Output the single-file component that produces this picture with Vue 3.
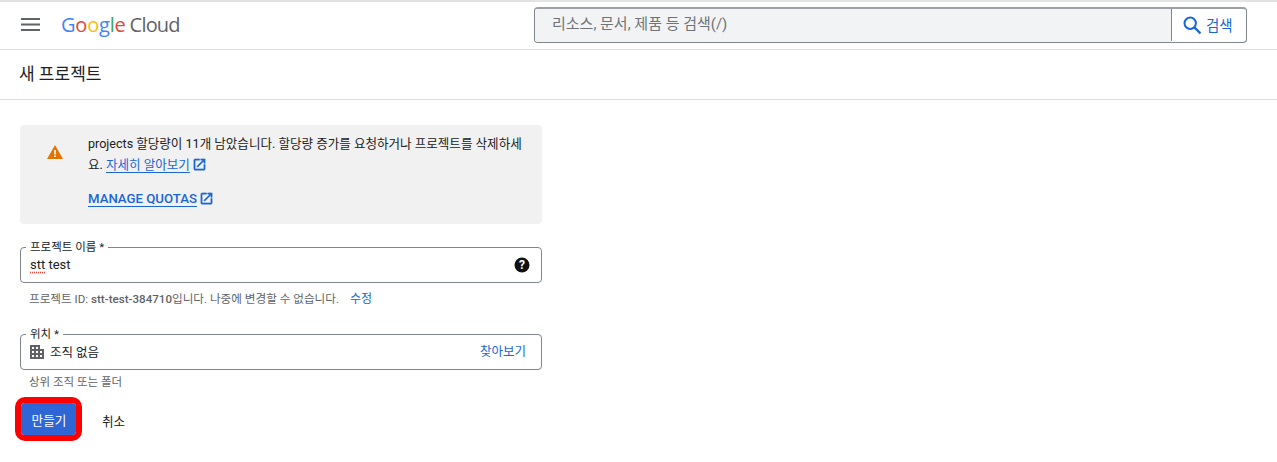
<script setup>
const ext = "M19 19H5V5h7V3H5a2 2 0 0 0-2 2v14a2 2 0 0 0 2 2h14a2 2 0 0 0 2-2v-7h-2v7zM14 3v2h3.59l-9.83 9.83 1.41 1.41L19 6.41V10h2V3h-7z";
</script>

<template>
  <div class="page">
    <header class="topbar">
      <div class="brand">
        <svg class="menu" viewBox="0 0 19 13" width="19" height="13"><path d="M0 1h19M0 6.500h19M0 12h19" stroke="#5f6368" stroke-width="2"/></svg>
        <div class="logo"><span class="b">G</span><span class="r">o</span><span class="y">o</span><span class="b">g</span><span class="g">l</span><span class="r">e</span><span class="cloud">Cloud</span></div>
      </div>
      <div class="search">
        <div class="search-input">리소스, 문서, 제품 등 검색(/)</div>
        <div class="search-btn">
          <svg viewBox="0 0 20 20" width="20" height="20"><circle cx="8.2" cy="8.2" r="5.7" fill="none" stroke="#1967d2" stroke-width="2"/><path d="M12.4 12.4l6 6" stroke="#1967d2" stroke-width="2.2"/></svg>
          <span>검색</span>
        </div>
      </div>
    </header>
    <div class="titlebar">새 프로젝트</div>
    <main class="form">
      <section class="notice">
        <svg class="warn" viewBox="0 0 16 14" width="16" height="14"><path d="M8 0l8 14H0z" fill="#e37400"/><path d="M7.2 5h1.6v4.400H7.200zM7.200 10.400h1.600V12H7.200z" fill="#fff"/></svg>
        <div class="notice-body">
          <p class="msg">projects 할당량이 11개 남았습니다. 할당량 증가를 요청하거나 프로젝트를 삭제하세요. <a>자세히 알아보기</a><svg class="ext" viewBox="0 0 24 24" width="15" height="15"><path :d="ext" fill="#1a66d9" stroke="#1a66d9" stroke-width="0.8"/></svg></p>
          <p class="manage"><a>MANAGE QUOTAS</a><svg class="ext" viewBox="0 0 24 24" width="15" height="15"><path :d="ext" fill="#1a66d9" stroke="#1a66d9" stroke-width="0.8"/></svg></p>
        </div>
      </section>

      <div class="field first">
        <label>프로젝트 이름 *</label>
        <span class="value"><span class="typo">stt</span> test</span>
        <svg class="help" viewBox="0 0 16 16" width="16" height="16"><circle cx="8" cy="8" r="7.5" fill="#111"/><text x="8" y="12" text-anchor="middle" class="q">?</text></svg>
      </div>
      <p class="hint">프로젝트 ID: <b>stt-test-384710</b>입니다. 나중에 변경할 수 없습니다.<a class="edit">수정</a></p>

      <div class="field second">
        <label>위치 *</label>
        <svg class="org" viewBox="0 0 14 14" width="14" height="14"><path fill-rule="evenodd" d="M0 0h10v4h4v10H0zM2 2v2h2V2zm4 0v2h2V2zM2 6v2h2V6zm4 0v2h2V6zm4 0v2h2V6zM2 10v2h2v-2zm4 0v2h2v-2zm4 0v2h2v-2z" fill="#5f6368"/></svg>
        <span class="value org-name">조직 없음</span>
        <a class="browse">찾아보기</a>
      </div>
      <p class="hint hint2">상위 조직 또는 폴더</p>

      <div class="actions">
        <button class="create">만들기</button>
        <span class="cancel">취소</span>
      </div>
    </main>
  </div>
</template>

<style>
html, body { margin: 0; background: #fff; }
</style>

<style scoped>
.page {
  height: 462px;
  overflow: hidden;
  background: #fff;
  color: #202124;
  font-family: Roboto, "Noto Sans CJK KR", sans-serif;
  font-size: 12.55px;
}
p { margin: 0; }
a { color: #1a66d9; }
.topbar {
  box-sizing: border-box;
  height: 50px;
  border-top: 2px solid #e3e3e3;
  border-bottom: 1px solid #dedede;
  display: flex;
  align-items: center;
  justify-content: space-between;
  padding: 0 30px 2px 21px;
}
.brand { display: flex; align-items: center; gap: 21px; }
.menu { display: block; }
.logo {
  display: flex;
  align-items: baseline;
  font-family: "Open Sans", Roboto, sans-serif;
  font-size: 20px;
  font-weight: 500;
  letter-spacing: -0.2px;
  line-height: 24px;
}
.b { color: #4285f4; }
.r { color: #ea4335; }
.y { color: #fbbc05; }
.g { color: #34a853; }
.cloud { color: #5f6368; margin-left: 4px; font-weight: 400; letter-spacing: -0.8px; }
.search {
  box-sizing: border-box;
  width: 713px;
  height: 36px;
  border: 1px solid #80868b;
  border-top: 2px solid #9aa0a6;
  border-radius: 4px;
  display: flex;
  overflow: hidden;
}
.search-input {
  flex: 1;
  background: #f1f3f4;
  color: #6f7378;
  font-size: 15px;
  line-height: 31px;
  padding-left: 17px;
}
.search-btn {
  box-sizing: border-box;
  width: 75px;
  margin: 0 0 1px;
  border-left: 1px solid #80868b;
  display: flex;
  align-items: center;
  padding-left: 10px;
  gap: 4px;
  color: #1967d2;
  font-size: 14.5px;
}
.titlebar {
  box-sizing: border-box;
  height: 50px;
  border-bottom: 1px solid #dedede;
  padding-left: 19px;
  font-size: 17px;
  line-height: 48px;
}
.form { width: 522px; margin-left: 20px; padding-top: 25px; }
.notice {
  box-sizing: border-box;
  height: 99px;
  background: #f1f1f1;
  border-radius: 4px;
  display: flex;
  padding: 8px 0 0 27px;
  gap: 25px;
}
.warn { margin-top: 12px; flex: none; }
.notice-body { width: 438px; }
.msg { line-height: 21px; }
.msg a, .manage a {
  text-decoration: underline;
  text-underline-offset: 3px;
}
.ext { vertical-align: -3px; margin-left: 2px; }
.manage { margin-top: 13px; line-height: 21px; font-size: 13.2px; font-weight: 500; }
.field {
  box-sizing: border-box;
  height: 36px;
  position: relative;
  border: 1px solid #80868b;
  border-radius: 4px;
  display: flex;
  align-items: center;
  padding: 0 9px;
}
.first { margin-top: 23px; }
.second { margin-top: 27px; }
.field label {
  position: absolute;
  left: 5px;
  top: -8px;
  padding: 0 4px;
  background: #fff;
  font-size: 11.5px;
  line-height: 14px;
}
.value { font-size: 13px; margin-top: -1px; }
.org-name { font-size: 12.5px; }
.typo {
  text-decoration: underline dotted #ea4335;
  text-underline-offset: 3px;
}
.help { margin-left: auto; margin-right: 2px; }
.q { fill: #fff; font: 700 12px Roboto, sans-serif; }
.org { margin-right: 6px; }
.browse { margin-left: auto; margin-right: 6px; font-size: 12.5px; margin-top: -3px; }
.hint {
  margin: 8px 0 0 9px;
  font-size: 11.6px;
  line-height: 16px;
  color: #5f6368;
}
.hint b { font-weight: 500; color: #5f6368; }
.edit { margin-left: 11px; font-size: 12px; }
.hint2 { margin-top: 4px; font-size: 11.5px; }
.actions { display: flex; align-items: center; margin-top: 7px; }
.create {
  box-sizing: border-box;
  width: 67px;
  height: 44px;
  margin-left: -5px;
  border: 6px solid #ff0000;
  border-radius: 10px;
  background: #2f66d6;
  background-clip: padding-box;
  color: #fff;
  font: 12.6px Roboto, "Noto Sans CJK KR", sans-serif;
  padding: 0 0 0 1px;
}
.cancel { margin-left: 20px; font-size: 12.6px; padding-top: 2px; }
</style>
